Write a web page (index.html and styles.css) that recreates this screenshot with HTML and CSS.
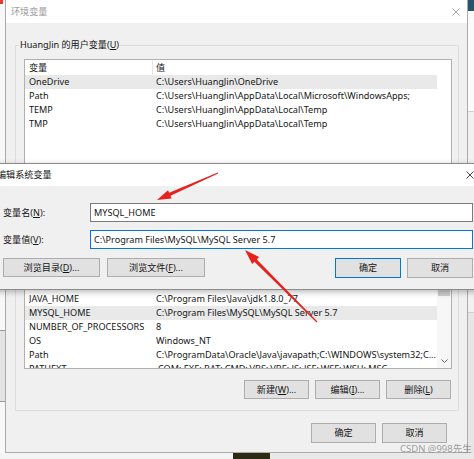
FILE: index.html
```html
<!DOCTYPE html>
<html lang="zh-CN">
<head>
<meta charset="utf-8">
<title>环境变量</title>
<link rel="stylesheet" href="styles.css">
</head>
<body>
<div class="desk">
  <div class="main">
    <div class="sl">
      <div class="sl-red"></div>
      <div class="sl-a"></div>
      <div class="sl-box"></div>
      <div class="sl-b"></div>
    </div>
    <div class="win">
      <div class="titlebar">
        <span class="title">环境变量</span>
        <svg class="x" width="8" height="8" viewBox="0 0 8 8"><path d="M0.5 0.5L7.5 7.5M7.5 0.5L0.5 7.5" stroke="#9a9a9a" stroke-width="0.9" fill="none"/></svg>
      </div>
      <div class="wbody">
        <div class="group g-user">
          <div class="legend">HuangJin 的用户变量(<u>U</u>)</div>
          <div class="list l-user">
            <div class="rows">
              <div class="lrow head"><span class="c1">变量</span><span class="c2">值</span></div>
              <div class="lrow sel"><span class="c1">OneDrive</span><span class="c2">C:\Users\HuangJin\OneDrive</span></div>
              <div class="lrow"><span class="c1">Path</span><span class="c2">C:\Users\HuangJin\AppData\Local\Microsoft\WindowsApps;</span></div>
              <div class="lrow"><span class="c1">TEMP</span><span class="c2">C:\Users\HuangJin\AppData\Local\Temp</span></div>
              <div class="lrow"><span class="c1">TMP</span><span class="c2">C:\Users\HuangJin\AppData\Local\Temp</span></div>
            </div>
          </div>
          <div class="btns">
            <div class="btn">新建(<u>N</u>)...</div>
            <div class="btn">编辑(<u>E</u>)...</div>
            <div class="btn">删除(<u>D</u>)</div>
          </div>
        </div>
        <div class="group g-sys">
          <div class="legend">系统变量(<u>S</u>)</div>
          <div class="list l-sys">
            <div class="rows">
              <div class="lrow head"><span class="c1">变量</span><span class="c2">值</span></div>
              <div class="lrow"><span class="c1">CLASSPATH</span><span class="c2">.;%JAVA_HOME%\lib;%JAVA_HOME%\lib\tools.jar</span></div>
              <div class="lrow"><span class="c1">ComSpec</span><span class="c2">C:\WINDOWS\system32\cmd.exe</span></div>
              <div class="lrow"><span class="c1">DriverData</span><span class="c2">C:\Windows\System32\Drivers\DriverData</span></div>
              <div class="lrow"><span class="c1">JAVA_HOME</span><span class="c2">C:\Program Files\Java\jdk1.8.0_77</span></div>
              <div class="lrow sel"><span class="c1">MYSQL_HOME</span><span class="c2">C:\Program Files\MySQL\MySQL Server 5.7</span></div>
              <div class="lrow"><span class="c1">NUMBER_OF_PROCESSORS</span><span class="c2">8</span></div>
              <div class="lrow"><span class="c1">OS</span><span class="c2">Windows_NT</span></div>
              <div class="lrow"><span class="c1">Path</span><span class="c2">C:\ProgramData\Oracle\Java\javapath;C:\WINDOWS\system32;C...</span></div>
              <div class="lrow"><span class="c1">PATHEXT</span><span class="c2">.COM;.EXE;.BAT;.CMD;.VBS;.VBE;.JS;.JSE;.WSF;.WSH;.MSC</span></div>
            </div>
            <div class="sbar">
              <div class="sb-up"></div>
              <div class="thumb"></div>
              <div class="track"></div>
              <div class="sb-down"><svg width="7" height="4" viewBox="0 0 7 4"><path d="M0.5 0.5L3.5 3.5L6.5 0.5" stroke="#606060" stroke-width="1" fill="none"/></svg></div>
            </div>
          </div>
          <div class="btns">
            <div class="btn">新建(<u>W</u>)...</div>
            <div class="btn">编辑(<u>I</u>)...</div>
            <div class="btn">删除(<u>L</u>)</div>
          </div>
        </div>
        <div class="footer">
          <div class="btn fbtn">确定</div>
          <div class="btn fbtn">取消</div>
        </div>
      </div>
    </div>
    <div class="sr">
      <div class="sr-teal"></div>
      <div class="sr-a"></div>
      <div class="sr-b"></div>
      <div class="sr-c"></div>
    </div>
  </div>
  <div class="bottom">
    <div class="bt-a"></div>
    <div class="bt-dark"></div>
    <div class="bt-b"></div>
  </div>
</div>

<div class="dlg">
  <div class="dtitle">
    <span class="title dark">编辑系统变量</span>
    <svg class="x" width="8" height="8" viewBox="0 0 8 8"><path d="M0.5 0.5L7.5 7.5M7.5 0.5L0.5 7.5" stroke="#333" stroke-width="0.9" fill="none"/></svg>
  </div>
  <div class="dbody">
    <div class="form">
      <label class="lbl">变量名(<u>N</u>):</label>
      <div class="inp">MYSQL_HOME</div>
      <label class="lbl">变量值(<u>V</u>):</label>
      <div class="inp focus">C:\Program Files\MySQL\MySQL Server 5.7</div>
    </div>
    <div class="dbtns">
      <div class="btn bw1">浏览目录(<u>D</u>)...</div>
      <div class="btn bw2">浏览文件(<u>F</u>)...</div>
      <div class="btn bw3 default">确定</div>
      <div class="btn bw3">取消</div>
    </div>
  </div>
</div>

<svg class="arrows" width="474" height="459" viewBox="0 0 474 459">
  <polygon fill="#e5231d" points="218.2,173.5 170.5,195.8 171.6,198.4 157,200 168,190.2 169.2,192.8 217.8,172.5"/>
  <polygon fill="#e5231d" points="317.4,321.6 256.8,259.4 259.1,257.1 245,250 252.1,264.1 254.4,261.8 316.6,322.4"/>
</svg>

<div class="wm">CSDN @998先生</div>
</body>
</html>
```

FILE: styles.css
```css
html, body {
  margin: 0;
  padding: 0;
}
body {
  width: 474px;
  height: 459px;
  overflow: hidden;
  position: relative;
  background: #f3f3f3;
  font-family: "Noto Sans", "Noto Sans CJK SC", sans-serif;
  font-size: 9.1px;
  color: #151515;
}
u {
  text-decoration: underline;
  text-underline-offset: 1px;
}

.desk {
  display: flex;
  flex-direction: column;
  height: 459px;
}
.main {
  display: flex;
  height: 453px;
}

/* left background strip */
.sl {
  width: 5px;
  display: flex;
  flex-direction: column;
  background: #f8f8f8;
}
.sl-red { width: 3px; height: 4px; background: #e33b2e; }
.sl-a { height: 326px; }
.sl-box { height: 70px; background: #e3e3e3; border-top: 1px solid #9a9a9a; border-bottom: 1px solid #9a9a9a; }
.sl-b { flex: 1; }

/* right background strip */
.sr {
  width: 6px;
  display: flex;
  flex-direction: column;
  background: #f6f6f6;
}
.sr-teal { height: 11px; background: #23556f; }
.sr-a { height: 100px; background: #fbfbfb; border-bottom: 1px solid #d0d0d0; }
.sr-b { height: 200px; background: #f1f1f1; border-bottom: 1px solid #cfcfcf; }
.sr-c { flex: 1; background: #e6e6e6; }

.bottom {
  display: flex;
  height: 6px;
}
.bt-a { width: 233px; background: #f4f4f4; }
.bt-dark { width: 37px; background: #2c2c14; }
.bt-b { flex: 1; background: #e9e9e9; }

/* main window */
.win {
  width: 463px;
  height: 453px;
  box-sizing: border-box;
  border: 1px solid #ababab;
  border-top: none;
  background: #f0f0f0;
  display: flex;
  flex-direction: column;
  overflow: hidden;
}
.titlebar {
  height: 23px;
  flex: none;
  background: #fff;
  display: flex;
  align-items: center;
  padding: 0 7px 0 5px;
}
.title {
  color: #9a9a9a;
  line-height: 12px;
}
.title.dark { color: #151515; }
.x { margin-left: auto; display: block; }

.wbody {
  display: flex;
  flex-direction: column;
}
.group {
  box-sizing: border-box;
  width: 444px;
  margin-left: 9px;
  border: 1px solid #dcdcdc;
  padding: 0 6px 0 8px;
  display: flex;
  flex-direction: column;
}
.g-user { margin-top: 22px; padding-bottom: 8px; }
.g-sys { margin-top: 14px; padding-bottom: 11px; }
.legend {
  align-self: flex-start;
  margin: -7px 0 0 -5px;
  padding: 0 1px;
  height: 12px;
  line-height: 12px;
  background: #f0f0f0;
}

.list {
  margin-top: 8px;
  box-sizing: border-box;
  background: #fff;
  border: 1px solid #b0b0b0;
  display: flex;
  overflow: hidden;
}
.l-user { height: 112px; }
.l-sys { height: 135px; }
.rows {
  width: 412px;
  flex: none;
  overflow: hidden;
}
.lrow {
  height: 14px;
  line-height: 14px;
  display: flex;
  padding-left: 4px;
  white-space: nowrap;
}
.lrow.head {
  height: 15px;
  line-height: 15px;
}
.c1 { width: 127px; flex: none; overflow: hidden; }
.c2 { flex: 1; overflow: hidden; }
.head .c1 {
  width: 123px;
  border-right: 1px solid #e6e6e6;
  margin-right: 3px;
}
.sel { background: #e9e9e9; }

.sbar {
  width: 14px;
  flex: none;
  display: flex;
  flex-direction: column;
  background: #f7f7f7;
}
.sb-up { height: 17px; }
.thumb { height: 44px; margin: 0 1px; background: #cdcdcd; }
.track { flex: 1; }
.sb-down {
  height: 14px;
  display: flex;
  align-items: center;
  justify-content: center;
}

.btns {
  display: flex;
  justify-content: flex-end;
  gap: 6px;
  margin-right: 1px;
}
.g-user .btns { margin-top: 7px; }
.g-sys .btns { margin-top: 11px; }
.btn {
  box-sizing: border-box;
  width: 65px;
  height: 19px;
  border: 1px solid #adadad;
  background: #e1e1e1;
  display: flex;
  align-items: center;
  justify-content: center;
  white-space: nowrap;
  line-height: 12px;
}

.footer {
  display: flex;
  justify-content: flex-end;
  gap: 6px;
  margin-top: 12px;
  padding-right: 20px;
}
.fbtn { height: 20px; }

/* front dialog */
.dlg {
  position: absolute;
  left: -12px;
  top: 163px;
  width: 505px;
  height: 127px;
  box-sizing: border-box;
  border: 1px solid #8c8c8c;
  background: #f0f0f0;
  box-shadow: 0 2px 6px rgba(0, 0, 0, 0.28);
}
.dtitle {
  height: 22px;
  background: #fff;
  display: flex;
  align-items: center;
  padding: 0 18px 0 8px;
}
.dbody {
  padding: 17px 0 0 14px;
}
.form {
  display: grid;
  grid-template-columns: 87px 383px;
  row-gap: 8px;
  align-items: center;
}
.lbl { line-height: 12px; white-space: nowrap; }
.inp {
  box-sizing: border-box;
  height: 19px;
  border: 1px solid #7a7a7a;
  background: #fff;
  padding-left: 3px;
  line-height: 17px;
  white-space: nowrap;
  overflow: hidden;
}
.inp.focus { border-color: #0078d7; }
.dbtns {
  width: 470px;
  display: flex;
  gap: 7px;
  margin-top: 9px;
}
.bw1 { width: 97px; }
.bw2 { width: 98px; }
.bw3 { width: 66px; height: 20px; }
.default { margin-left: auto; border-color: #0078d7; }
.dbtns .bw3:last-child { margin-left: -1px; }

.arrows {
  position: absolute;
  left: 0;
  top: 0;
  pointer-events: none;
}
.wm {
  position: absolute;
  left: 400px;
  top: 443px;
  font-size: 9.5px;
  line-height: 12px;
  color: rgba(140, 140, 140, 0.85);
  white-space: nowrap;
}
```
